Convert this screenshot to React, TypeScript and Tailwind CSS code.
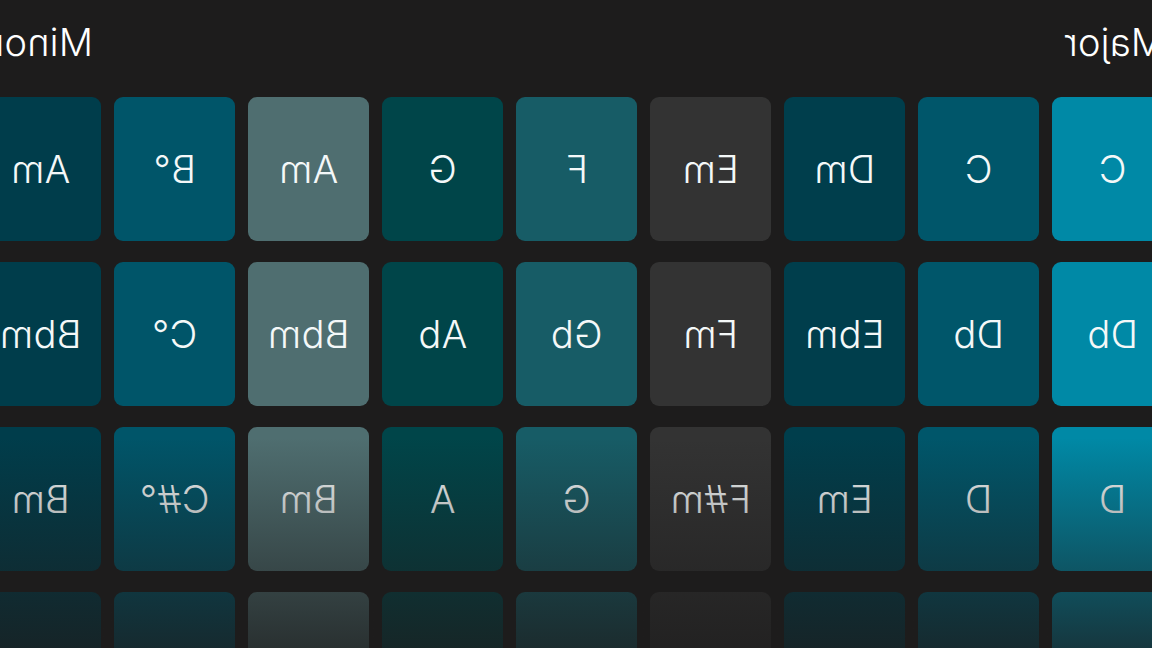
import React from "react";

type Chord = { name: string; color: string };

// degree colours, indexed by column inside a section
const majorColors = [
  "bg-[#0089a6]",
  "bg-[#00566a]",
  "bg-[#003e4c]",
  "bg-[#333333]",
  "bg-[#175c66]",
  "bg-[#004549]",
  "bg-[#4f6e70]",
  "bg-[#005569]",
];

const minorColors = [
  "bg-[#003d4b]",
  "bg-[#005569]",
  "bg-[#00566a]",
  "bg-[#003e4c]",
  "bg-[#333333]",
  "bg-[#175c66]",
  "bg-[#004549]",
];

const majorRows = [
  ["C", "C", "Dm", "Em", "F", "G", "Am", "B°"],
  ["Db", "Db", "Ebm", "Fm", "Gb", "Ab", "Bbm", "C°"],
  ["D", "D", "Em", "F#m", "G", "A", "Bm", "C#°"],
  ["Eb", "Eb", "Fm", "Gm", "Ab", "Bb", "Cm", "D°"],
];

const minorRows = [
  ["Am", "B°", "C", "Dm", "Em", "F", "G"],
  ["Bbm", "C°", "Db", "Ebm", "Fm", "Gb", "Ab"],
  ["Bm", "C#°", "D", "Em", "F#m", "G", "A"],
  ["Cm", "D°", "Eb", "Fm", "Gm", "Ab", "Bb"],
];

function toChords(rows: string[][], colors: string[]): Chord[] {
  return rows.flatMap((row) => row.map((name, i) => ({ name, color: colors[i] })));
}

function Section({ title, chords, cols }: { title: string; chords: Chord[]; cols: number }) {
  return (
    <section className="flex shrink-0 flex-col">
      <h2 className="mb-[33px] pl-[8px] text-[38px] font-light leading-[44px] tracking-[0.005em] text-white">
        {title}
      </h2>
      <div
        className={
          cols === 8
            ? "grid grid-cols-[repeat(8,121px)] gap-x-[13px] gap-y-[21px]"
            : "grid grid-cols-[repeat(7,121px)] gap-x-[13px] gap-y-[21px]"
        }
      >
        {chords.map((c, i) => (
          <button
            key={i}
            className={`flex h-[144px] w-[121px] items-center justify-center rounded-[9px] text-[38px] font-light tracking-[0.01em] text-[#f4f8f8] ${c.color}`}
          >
            {c.name}
          </button>
        ))}
      </div>
    </section>
  );
}

export default function App() {
  return (
    <div className="relative h-[648px] w-[1152px] overflow-hidden bg-[#1d1c1c] font-['Inter','Roboto',sans-serif] [transform:scaleX(-1)]">
      <div className="ml-[-21px] flex gap-[13px] pt-[20px]">
        <Section title="Major" chords={toChords(majorRows, majorColors)} cols={8} />
        <Section title="Minor" chords={toChords(minorRows, minorColors)} cols={7} />
      </div>
      {/* fade towards the bottom edge */}
      <div className="pointer-events-none absolute inset-x-0 bottom-0 h-[210px] bg-linear-to-b from-transparent to-[#1d1c1c]/75" />
    </div>
  );
}
